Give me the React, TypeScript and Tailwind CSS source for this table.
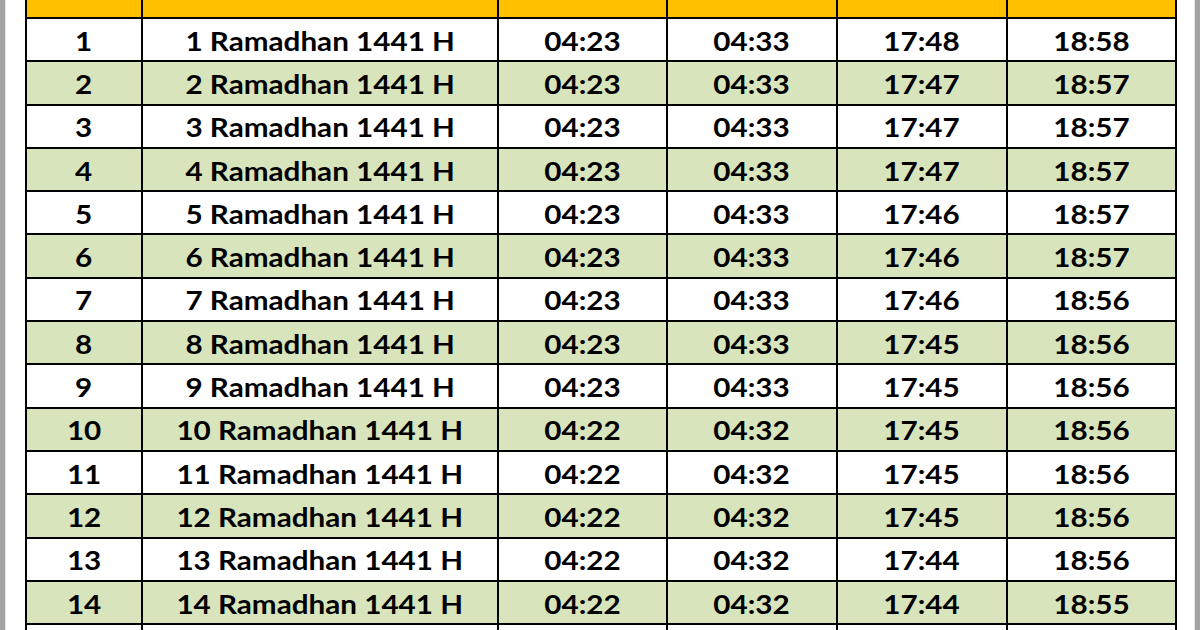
const rows = [
  ["1", "04:23", "04:33", "17:48", "18:58"],
  ["2", "04:23", "04:33", "17:47", "18:57"],
  ["3", "04:23", "04:33", "17:47", "18:57"],
  ["4", "04:23", "04:33", "17:47", "18:57"],
  ["5", "04:23", "04:33", "17:46", "18:57"],
  ["6", "04:23", "04:33", "17:46", "18:57"],
  ["7", "04:23", "04:33", "17:46", "18:56"],
  ["8", "04:23", "04:33", "17:45", "18:56"],
  ["9", "04:23", "04:33", "17:45", "18:56"],
  ["10", "04:22", "04:32", "17:45", "18:56"],
  ["11", "04:22", "04:32", "17:45", "18:56"],
  ["12", "04:22", "04:32", "17:45", "18:56"],
  ["13", "04:22", "04:32", "17:44", "18:56"],
  ["14", "04:22", "04:32", "17:44", "18:55"],
];

const cols = "grid grid-cols-[116px_356px_169px_170px_170px_171px]";

function Cell({ children, last }: { children?: React.ReactNode; last?: boolean }) {
  return (
    <div
      className={
        "flex items-center justify-center border-l-2 border-black " +
        (last ? "border-r-2" : "")
      }
    >
      {children !== undefined && (
        <span className="inline-block scale-x-[1.14] pt-[2px]">{children}</span>
      )}
    </div>
  );
}

function Row({ bg, cells }: { bg: string; cells?: string[] }) {
  return (
    <div className={cols + " h-[43.3px] border-b-2 border-black " + bg}>
      <Cell>{cells?.[0]}</Cell>
      <Cell>{cells ? `${cells[0]} Ramadhan 1441 H` : undefined}</Cell>
      <Cell>{cells?.[1]}</Cell>
      <Cell>{cells?.[2]}</Cell>
      <Cell>{cells?.[3]}</Cell>
      <Cell last>{cells?.[4]}</Cell>
    </div>
  );
}

export default function App() {
  return (
    <div className="flex h-[630px] w-[1200px] overflow-hidden bg-white">
      <div className="w-[5px] shrink-0 bg-[#a3a3a3]" />
      <div className="w-px shrink-0 bg-[#e6e6e6]" />
      <div className="flex-1 overflow-hidden pl-[19px]">
        <div className="-mt-[25px] w-[1152px] font-['Lato',sans-serif] text-[26px] font-bold leading-none text-black">
          <div className={cols + " h-[44px] border-b-2 border-black bg-[#ffc000]"}>
            <Cell />
            <Cell />
            <Cell />
            <Cell />
            <Cell />
            <Cell last />
          </div>
          {rows.map((r, i) => (
            <Row key={r[0]} cells={r} bg={i % 2 === 1 ? "bg-[#d8e4bc]" : "bg-white"} />
          ))}
          <Row bg="bg-white" />
        </div>
      </div>
      <div className="w-px shrink-0 bg-[#e6e6e6]" />
      <div className="w-[5px] shrink-0 bg-[#a3a3a3]" />
    </div>
  );
}
